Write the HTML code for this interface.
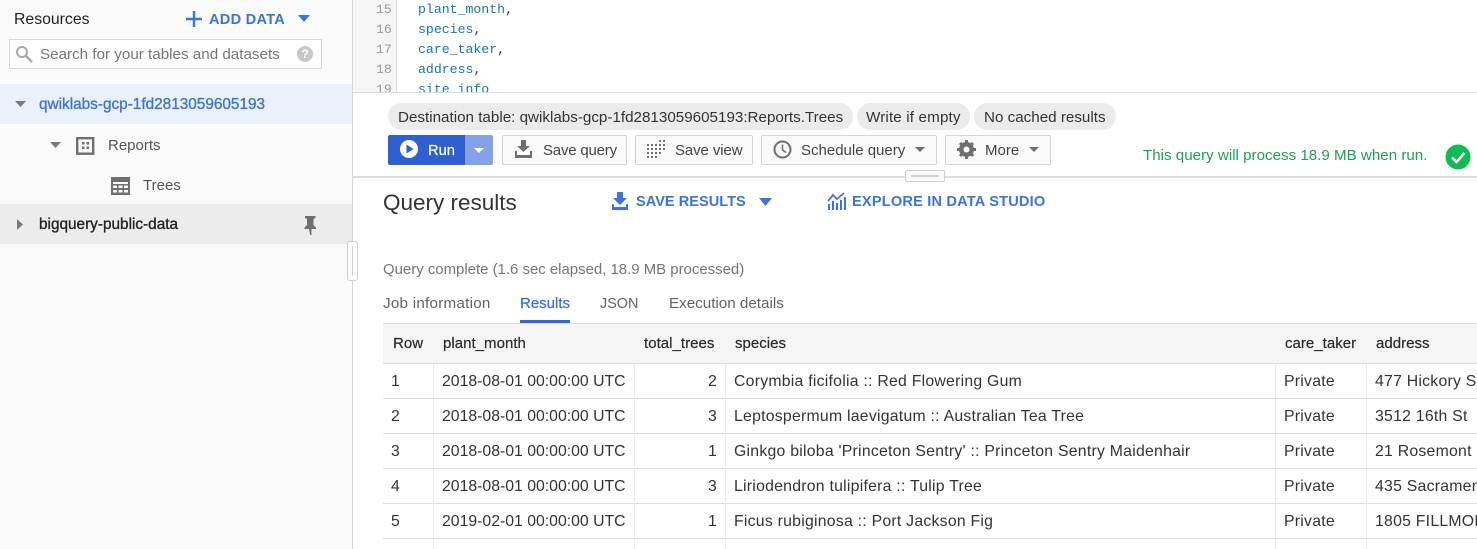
<!DOCTYPE html>
<html><head><meta charset="utf-8">
<style>
html,body{margin:0;padding:0;background:#fff}
#p{position:relative;width:1477px;height:549px;overflow:hidden;background:#fff;font-family:"Liberation Sans",sans-serif;font-size:14px;color:#202124}
#p div,#p svg{position:absolute}
.t{white-space:nowrap;line-height:20px;height:20px}
.m{font-family:"Liberation Mono",monospace;font-size:13.2px;color:#1279ad}
.n{font-family:"Liberation Mono",monospace;font-size:13.2px;color:#9a9a9a}
.c{font-size:15.8px;color:#333;letter-spacing:.25px}
.d{letter-spacing:0}
.h{font-size:15px;color:#2a2a2a;letter-spacing:.03px;-webkit-text-stroke:.2px #2a2a2a}
.b{background:#fafafa;border:1px solid #d4d4d4;border-radius:2px;box-sizing:border-box}
.chip{background:#ebebeb;border-radius:14px;height:27px}
.l{background:#dcdcdc}
.v{background:#ececec;width:1px;top:364px;height:185px}
.blue{color:#3367d6;font-weight:700}
</style></head><body><div id="p">
<div style="left:0;top:0;width:352px;height:549px;background:#fafafa"></div>
<div style="left:352px;top:0;width:1px;height:549px;background:#d8d8d8"></div>
<div class="t" style="left:14px;top:10px;font-size:15.8px;color:#222">Resources</div>
<svg style="left:185px;top:10px" width="18" height="18"><path d="M1 9H17M9 1V17" stroke="#3d73dc" stroke-width="2.400"/></svg>
<div class="t blue" style="left:209px;top:10px;font-size:14.6px;color:#3d73dc;letter-spacing:.25px">ADD DATA</div>
<svg style="left:297px;top:14px" width="14" height="10"><path d="M1 1H13L7 8Z" fill="#3d73dc"/></svg>
<div style="left:9px;top:39px;width:313px;height:30px;background:#fff;border:1px solid #d6d6d6;box-sizing:border-box"></div>
<svg style="left:14px;top:44px" width="20" height="20"><circle cx="8" cy="8" r="5" fill="none" stroke="#a8a8a8" stroke-width="2"/><path d="M12 12L18 18" stroke="#a8a8a8" stroke-width="2.400"/></svg>
<div class="t" style="left:40px;top:45px;font-size:15.2px;color:#757575">Search for your tables and datasets</div>
<div class="t" style="left:297px;top:46px;width:16px;height:16px;border-radius:8px;background:#c8c8c8;color:#fff;font-size:12px;font-weight:700;line-height:16px;text-align:center">?</div>
<div style="left:0;top:84px;width:352px;height:40px;background:#ebf1fa"></div>
<svg style="left:15px;top:101px" width="11" height="7"><path d="M0 0H11L5.500 6Z" fill="#7a7a7a"/></svg>
<div class="t" style="left:39px;top:95px;font-size:15.35px;color:#3d73dc;-webkit-text-stroke:.35px #3d73dc">qwiklabs-gcp-1fd2813059605193</div>
<svg style="left:50px;top:142px" width="11" height="7"><path d="M0 0H11L5.500 6Z" fill="#7a7a7a"/></svg>
<svg style="left:76px;top:137px" width="19" height="18"><rect x="1.200" y="1.200" width="16" height="15.500" fill="none" stroke="#6f6f6f" stroke-width="2.400"/><path d="M6 5h2.500v2.500H6zM10.500 5h2.500v2.500h-2.500zM6 9.500h2.500v2.500H6zM10.500 9.500h2.500v2.500h-2.500z" fill="#6f6f6f"/></svg>
<div class="t" style="left:108px;top:136px;font-size:15px;color:#555">Reports</div>
<svg style="left:111px;top:177px" width="19" height="18"><rect width="19" height="18" fill="#6f6f6f"/><path d="M2 5h15v2H2zM2 8.500h4v2.500H2zM7.500 8.500h4v2.500h-4zM13 8.500h4v2.500h-4zM2 13h4v2.500H2zM7.500 13h4v2.500h-4zM13 13h4v2.500h-4z" fill="#fafafa"/></svg>
<div class="t" style="left:143px;top:176px;font-size:15px;color:#555">Trees</div>
<div style="left:0;top:204px;width:352px;height:40px;background:#ececec"></div>
<svg style="left:17px;top:219px" width="7" height="11"><path d="M0 0V11L6 5.500Z" fill="#7a7a7a"/></svg>
<div class="t" style="left:39px;top:215px;font-size:15.35px;color:#222;-webkit-text-stroke:.35px #222">bigquery-public-data</div>
<svg style="left:303px;top:216px" width="15" height="20"><path d="M2 0H12.500V2L10.500 3V9L13 11.500V13H8.500V19L7.200 19L6 13H1.500V11.500L4 9V3L2 2Z" fill="#6f6f6f"/></svg>
<div style="left:347px;top:241px;width:11px;height:40px;background:#fbfbfb;border:1px solid #d2d2d2;border-radius:3px;box-sizing:border-box"></div>
<div style="left:352px;top:246px;width:1px;height:30px;background:#cfcfcf"></div>

<div style="left:353px;top:0;width:44px;height:92px;background:#f5f5f5"></div>
<div style="left:396px;top:0;width:1px;height:92px;background:#dedede"></div>
<div class="t n" style="left:376px;top:0">15</div><div class="t n" style="left:376px;top:20px">16</div><div class="t n" style="left:376px;top:40px">17</div><div class="t n" style="left:376px;top:60px">18</div>
<div style="left:353px;top:0;width:1124px;height:92px;overflow:hidden">
<div class="t n" style="left:23px;top:80px">19</div>
<div class="t m" style="left:65px;top:0">plant_month<span style="color:#333">,</span></div>
<div class="t m" style="left:65px;top:20px">species<span style="color:#333">,</span></div>
<div class="t m" style="left:65px;top:40px">care_taker<span style="color:#333">,</span></div>
<div class="t m" style="left:65px;top:60px">address<span style="color:#333">,</span></div>
<div class="t m" style="left:65px;top:80px">site_info</div>
</div>
<div class="l" style="left:353px;top:92px;width:1124px;height:1px"></div>

<div class="chip" style="left:388px;top:103px;width:465px"></div>
<div class="t" style="left:398px;top:108px;font-size:15.2px;color:#333">Destination table: qwiklabs-gcp-1fd2813059605193:Reports.Trees</div>
<div class="chip" style="left:857px;top:103px;width:113px"></div>
<div class="t" style="left:866px;top:108px;font-size:15.2px;color:#333;letter-spacing:.15px">Write if empty</div>
<div class="chip" style="left:974px;top:103px;width:142px"></div>
<div class="t" style="left:984px;top:108px;font-size:15.2px;color:#333">No cached results</div>

<div style="left:388px;top:135px;width:77px;height:30px;background:#2f60cf;border-radius:2px 0 0 2px"></div>
<div style="left:465px;top:135px;width:28px;height:30px;background:#85a3e4;border-radius:0 2px 2px 0"></div>
<svg style="left:400px;top:140px" width="18" height="18"><circle cx="9" cy="9" r="9" fill="#fff"/><path d="M6.500 4.500L13.500 9L6.500 13.500Z" fill="#2f60cf"/></svg>
<div class="t" style="left:428px;top:141px;font-size:14.7px;color:#f4f6fc;-webkit-text-stroke:.3px #f4f6fc">Run</div>
<svg style="left:474px;top:148px" width="11" height="6"><path d="M0 0H10L5 5Z" fill="#fff"/></svg>

<div class="b" style="left:502px;top:135px;width:125px;height:30px"></div>
<svg style="left:515px;top:140px" width="17" height="18"><path d="M6 0H11V6H15L8.500 12L2 6H6ZM0 11H2V15H15V11H17V18H0Z" fill="#6f6f6f"/></svg>
<div class="t" style="left:543px;top:141px;font-size:15px;color:#444;letter-spacing:-.2px">Save query</div>
<div class="b" style="left:635px;top:135px;width:118px;height:30px"></div>
<svg style="left:647px;top:140px" width="19" height="19" fill="#6f6f6f"><path d="M0 4h2v2H0zM4 4h2v2H4zM8 4h2v2H8zM12 4h2v2h-2zM16 4h2v2h-2zM0 8h2v2H0zM4 8h2v2H4zM8 8h2v2H8zM12 8h2v2h-2zM16 8h2v2h-2zM0 12h2v2H0zM4 12h2v2H4zM8 12h2v2H8zM12 12h2v2h-2zM0 16h2v2H0zM4 16h2v2H4zM8 16h2v2H8zM12 0h2v2h-2zM16 0h2v2h-2z"/></svg>
<div class="t" style="left:675px;top:141px;font-size:15px;color:#444;letter-spacing:-.1px">Save view</div>
<div class="b" style="left:761px;top:135px;width:176px;height:30px"></div>
<svg style="left:773px;top:140px" width="19" height="19"><circle cx="9.500" cy="9.500" r="8" fill="none" stroke="#6f6f6f" stroke-width="2"/><path d="M9.500 4.500V10L13 12.500" fill="none" stroke="#6f6f6f" stroke-width="1.600"/></svg>
<div class="t" style="left:801px;top:141px;font-size:15px;color:#444">Schedule query</div>
<svg style="left:915px;top:147px" width="11" height="6"><path d="M0 0H10L5 5Z" fill="#6f6f6f"/></svg>
<div class="b" style="left:945px;top:135px;width:106px;height:30px"></div>
<svg style="left:957px;top:140px" width="19" height="19"><circle cx="9.500" cy="9.500" r="5.500" fill="none" stroke="#6f6f6f" stroke-width="4"/><path d="M9.500 0V19M0 9.500H19M3 3L16 16M16 3L3 16" stroke="#6f6f6f" stroke-width="3"/><circle cx="9.500" cy="9.500" r="3" fill="#fafafa"/></svg>
<div class="t" style="left:985px;top:141px;font-size:15px;color:#444">More</div>
<svg style="left:1029px;top:147px" width="11" height="6"><path d="M0 0H10L5 5Z" fill="#6f6f6f"/></svg>

<div class="t" style="left:1143px;top:146px;font-size:15.15px;color:#1e9e58">This query will process 18.9 MB when run.</div>
<svg style="left:1445px;top:144px" width="26" height="26"><circle cx="13" cy="13" r="12.500" fill="#0dbd51"/><path d="M7 13.500L11.500 18L19.500 9" fill="none" stroke="#fff" stroke-width="2.600"/></svg>

<div class="l" style="left:353px;top:176px;width:1124px;height:2px"></div>
<div style="left:905px;top:170px;width:40px;height:12px;background:#fbfbfb;border:1px solid #d2d2d2;border-radius:2px;box-sizing:border-box"></div>
<div style="left:911px;top:175px;width:28px;height:2px;background:#cfcfcf"></div>

<div class="t" style="left:383px;top:192px;font-size:22.5px;line-height:22px;color:#333">Query results</div>
<svg style="left:612px;top:192px" width="16" height="18"><path d="M5 0H11V6H15L8 13L1 6H5ZM0 12H2V15H14V12H16V18H0Z" fill="#3d73dc"/></svg>
<div class="t blue" style="left:636px;top:192px;font-size:14.6px;color:#3d73dc">SAVE RESULTS</div>
<svg style="left:759px;top:198px" width="13" height="9"><path d="M0 0H13L6.500 8Z" fill="#3d73dc"/></svg>
<svg style="left:827px;top:192px" width="19" height="18"><path d="M1 18V12H3V18ZM5 18V9H7V18ZM9 18V11H11V18ZM13 18V8H15V18ZM17 18V5H19V18Z" fill="#3d73dc"/><path d="M1 9L6 3L10 7L17 1" fill="none" stroke="#3d73dc" stroke-width="1.800"/></svg>
<div class="t blue" style="left:852px;top:192px;font-size:14.6px;color:#3d73dc;letter-spacing:.18px">EXPLORE IN DATA STUDIO</div>

<div class="t" style="left:383px;top:260px;font-size:14.95px;color:#757575">Query complete (1.6 sec elapsed, 18.9 MB processed)</div>
<div class="t" style="left:383px;top:294px;font-size:15.2px;color:#5f6368;letter-spacing:.25px">Job information</div>
<div class="t" style="left:520px;top:294px;font-size:15px;color:#3d73dc;-webkit-text-stroke:.3px #3d73dc">Results</div>
<div style="left:520px;top:320px;width:50px;height:3px;background:#3367d6"></div>
<div class="t" style="left:600px;top:294px;font-size:14.4px;color:#5f6368">JSON</div>
<div class="t" style="left:669px;top:294px;font-size:15.2px;color:#5f6368">Execution details</div>

<div style="left:383px;top:323px;width:1094px;height:40px;background:#f5f5f5"></div>
<div class="l" style="left:383px;top:323px;width:1094px;height:1px"></div>
<div class="l" style="left:383px;top:363px;width:1094px;height:1px"></div>
<div class="l" style="left:383px;top:398px;width:1094px;height:1px"></div>
<div class="l" style="left:383px;top:433px;width:1094px;height:1px"></div>
<div class="l" style="left:383px;top:468px;width:1094px;height:1px"></div>
<div class="l" style="left:383px;top:503px;width:1094px;height:1px"></div>
<div class="l" style="left:383px;top:538px;width:1094px;height:1px"></div>
<div class="v" style="left:433px"></div><div class="v" style="left:634px"></div><div class="v" style="left:725px"></div><div class="v" style="left:1275px"></div><div class="v" style="left:1366px"></div>

<div class="t h" style="left:393px;top:334px">Row</div>
<div class="t h" style="left:443px;top:334px">plant_month</div>
<div class="t h" style="left:644px;top:334px">total_trees</div>
<div class="t h" style="left:735px;top:334px">species</div>
<div class="t h" style="left:1285px;top:334px">care_taker</div>
<div class="t h" style="left:1376px;top:334px">address</div>

<div class="t c" style="left:391px;top:372px">1</div><div class="t c d" style="left:442px;top:372px">2018-08-01 00:00:00 UTC</div><div class="t c" style="left:680px;width:37px;text-align:right;top:372px">2</div><div class="t c" style="left:734px;top:372px">Corymbia ficifolia :: Red Flowering Gum</div><div class="t c" style="left:1284px;top:372px">Private</div><div class="t c" style="left:1375px;top:372px">477 Hickory St</div>
<div class="t c" style="left:391px;top:407px">2</div><div class="t c d" style="left:442px;top:407px">2018-08-01 00:00:00 UTC</div><div class="t c" style="left:680px;width:37px;text-align:right;top:407px">3</div><div class="t c" style="left:734px;top:407px">Leptospermum laevigatum :: Australian Tea Tree</div><div class="t c" style="left:1284px;top:407px">Private</div><div class="t c" style="left:1375px;top:407px">3512 16th St</div>
<div class="t c" style="left:391px;top:442px">3</div><div class="t c d" style="left:442px;top:442px">2018-08-01 00:00:00 UTC</div><div class="t c" style="left:680px;width:37px;text-align:right;top:442px">1</div><div class="t c" style="left:734px;top:442px">Ginkgo biloba 'Princeton Sentry' :: Princeton Sentry Maidenhair</div><div class="t c" style="left:1284px;top:442px">Private</div><div class="t c" style="left:1375px;top:442px">21 Rosemont</div>
<div class="t c" style="left:391px;top:477px">4</div><div class="t c d" style="left:442px;top:477px">2018-08-01 00:00:00 UTC</div><div class="t c" style="left:680px;width:37px;text-align:right;top:477px">3</div><div class="t c" style="left:734px;top:477px">Liriodendron tulipifera :: Tulip Tree</div><div class="t c" style="left:1284px;top:477px">Private</div><div class="t c" style="left:1375px;top:477px">435 Sacramento</div>
<div class="t c" style="left:391px;top:512px">5</div><div class="t c d" style="left:442px;top:512px">2019-02-01 00:00:00 UTC</div><div class="t c" style="left:680px;width:37px;text-align:right;top:512px">1</div><div class="t c" style="left:734px;top:512px">Ficus rubiginosa :: Port Jackson Fig</div><div class="t c" style="left:1284px;top:512px">Private</div><div class="t c" style="left:1375px;top:512px">1805 FILLMORE</div>
</div></body></html>
